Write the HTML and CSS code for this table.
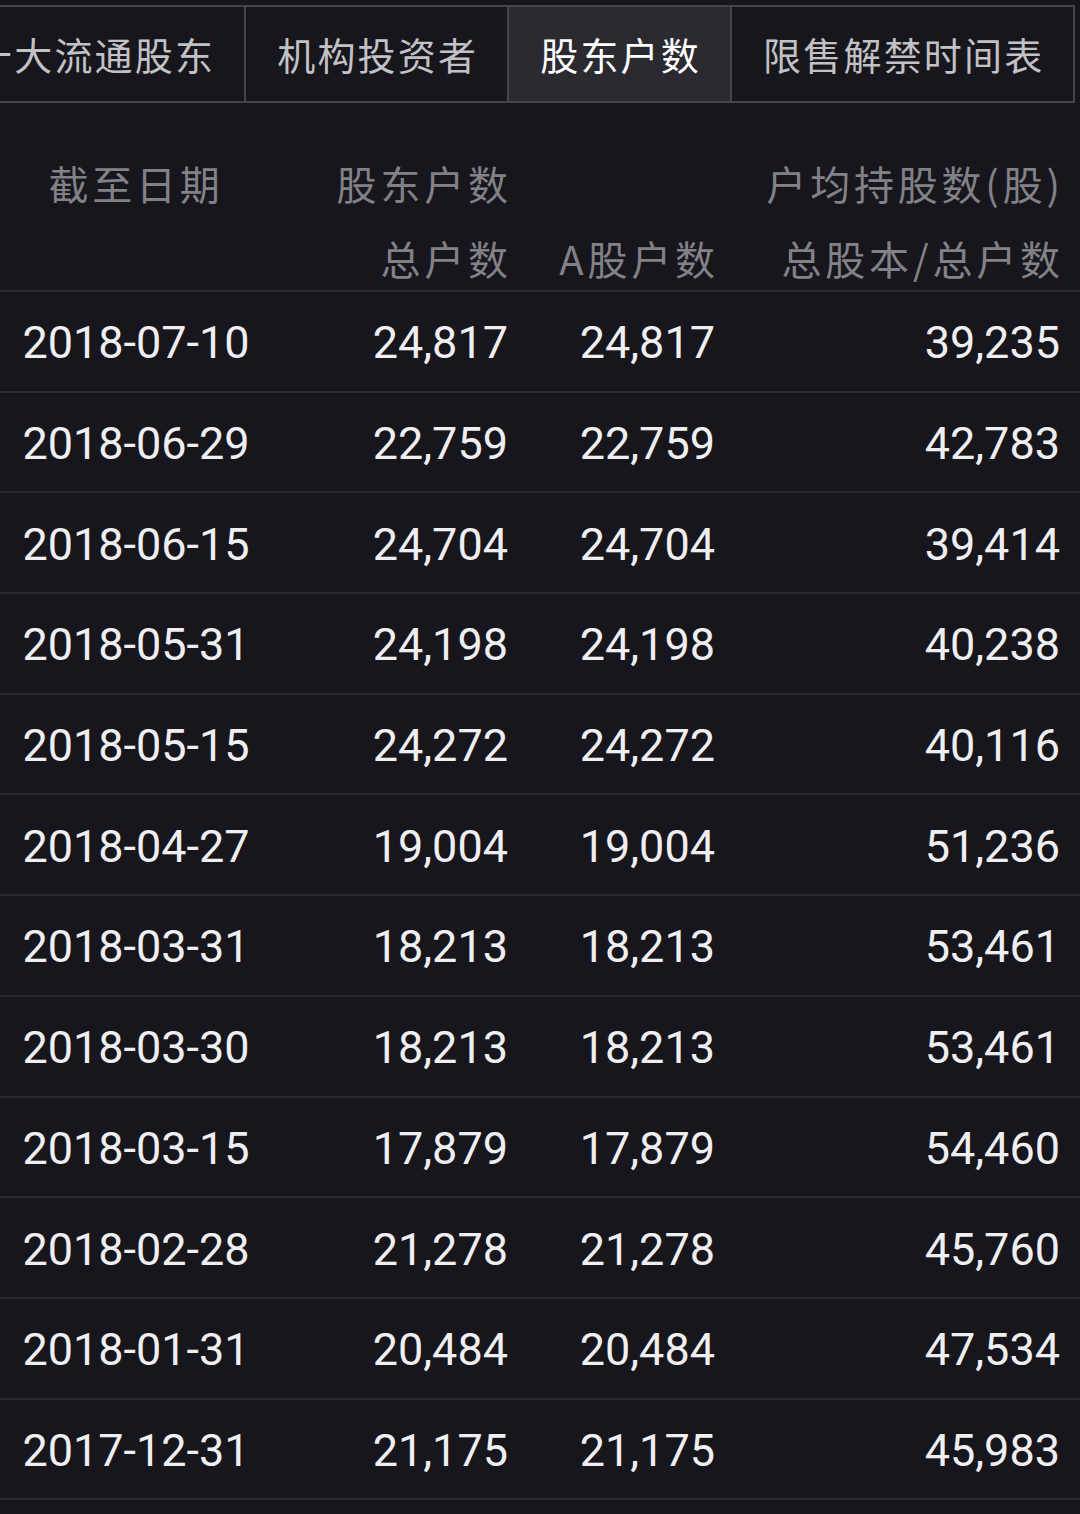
FILE: index.html
```html
<!DOCTYPE html>
<html lang="zh-CN">

<head>
    <meta charset="UTF-8">
    <meta name="viewport" content="width=device-width, initial-scale=1.0">
    <title>股东户数</title>
    <link rel="stylesheet" href="styles.css">
</head>

<body>
    <!-- Tab bar (scrolled a little to the left) -->
    <div class="tabs">
        <div class="tab">十大流通股东</div>
        <div class="tab">机构投资者</div>
        <div class="tab active">股东户数</div>
        <div class="tab">限售解禁时间表</div>
    </div>

    <!-- Table header -->
    <div class="head">
        <div class="h-date">截至日期</div>
        <div class="h-group">股东户数</div>
        <div class="h-avg">户均持股数(股)</div>
        <div class="h-total">总户数</div>
        <div class="h-a">A股户数</div>
        <div class="h-ratio">总股本/总户数</div>
    </div>

    <!-- Rows -->
    <div class="rows">
        <div class="row"><span class="date">2018-07-10</span><span>24,817</span><span>24,817</span><span>39,235</span></div>
        <div class="row"><span class="date">2018-06-29</span><span>22,759</span><span>22,759</span><span>42,783</span></div>
        <div class="row"><span class="date">2018-06-15</span><span>24,704</span><span>24,704</span><span>39,414</span></div>
        <div class="row"><span class="date">2018-05-31</span><span>24,198</span><span>24,198</span><span>40,238</span></div>
        <div class="row"><span class="date">2018-05-15</span><span>24,272</span><span>24,272</span><span>40,116</span></div>
        <div class="row"><span class="date">2018-04-27</span><span>19,004</span><span>19,004</span><span>51,236</span></div>
        <div class="row"><span class="date">2018-03-31</span><span>18,213</span><span>18,213</span><span>53,461</span></div>
        <div class="row"><span class="date">2018-03-30</span><span>18,213</span><span>18,213</span><span>53,461</span></div>
        <div class="row"><span class="date">2018-03-15</span><span>17,879</span><span>17,879</span><span>54,460</span></div>
        <div class="row"><span class="date">2018-02-28</span><span>21,278</span><span>21,278</span><span>45,760</span></div>
        <div class="row"><span class="date">2018-01-31</span><span>20,484</span><span>20,484</span><span>47,534</span></div>
        <div class="row"><span class="date">2017-12-31</span><span>21,175</span><span>21,175</span><span>45,983</span></div>
    </div>
</body>

</html>
```

FILE: styles.css
```css
html,
body {
    margin: 0;
    background-color: #17161c;
    overflow: hidden;
}

body {
    font-family: Roboto, "Noto Sans CJK SC", sans-serif;
    color: #efeff2;
}

/* Tabs */
.tabs {
    display: flex;
    width: fit-content;
    margin: 5px 0 0 -59px;
    border-top: 2px solid #45444b;
    border-bottom: 2px solid #45444b;
}

.tab {
    font-family: "Noto Sans CJK SC", sans-serif;
    font-size: 38px;
    letter-spacing: 2.2px;
    line-height: 94px;
    height: 94px;
    padding: 0 29px 0 31px;
    color: #c2c1c6;
    border-left: 2px solid #45444b;
    white-space: nowrap;
}

.tab:last-child {
    border-right: 2px solid #45444b;
}

.tab.active {
    background-color: #2a2a30;
    color: #ffffff;
}

/* Header */
.head {
    display: grid;
    grid-template-columns: 272px 236px 207px 345px;
    grid-template-rows: 60px 60px;
    row-gap: 15px;
    padding: 50px 20px 2px 0;
    border-bottom: 2px solid #2b2a31;
    font-family: "Noto Sans CJK SC", sans-serif;
    font-size: 40px;
    letter-spacing: 3.8px;
    line-height: 60px;
    color: #828188;
}

.head div {
    text-align: right;
    white-space: nowrap;
    margin-right: -3.8px;
}

.h-date {
    grid-column: 1;
    grid-row: 1;
    text-align: center !important;
    margin-right: 0 !important;
}

.h-group {
    grid-column: 2;
    grid-row: 1;
}

.h-avg {
    grid-column: 3 / 5;
    grid-row: 1;
}

.h-total {
    grid-column: 2;
    grid-row: 2;
}

.h-a {
    grid-column: 3;
    grid-row: 2;
}

.h-ratio {
    grid-column: 4;
    grid-row: 2;
}

/* Rows */
.row {
    display: grid;
    grid-template-columns: 272px 236px 207px 345px;
    align-items: center;
    height: 98.7px;
    padding-right: 20px;
    border-bottom: 2px solid #2b2a31;
    font-size: 45px;
}

.row span {
    text-align: right;
    padding-top: 3px;
}

.row .date {
    text-align: center;
}
```
